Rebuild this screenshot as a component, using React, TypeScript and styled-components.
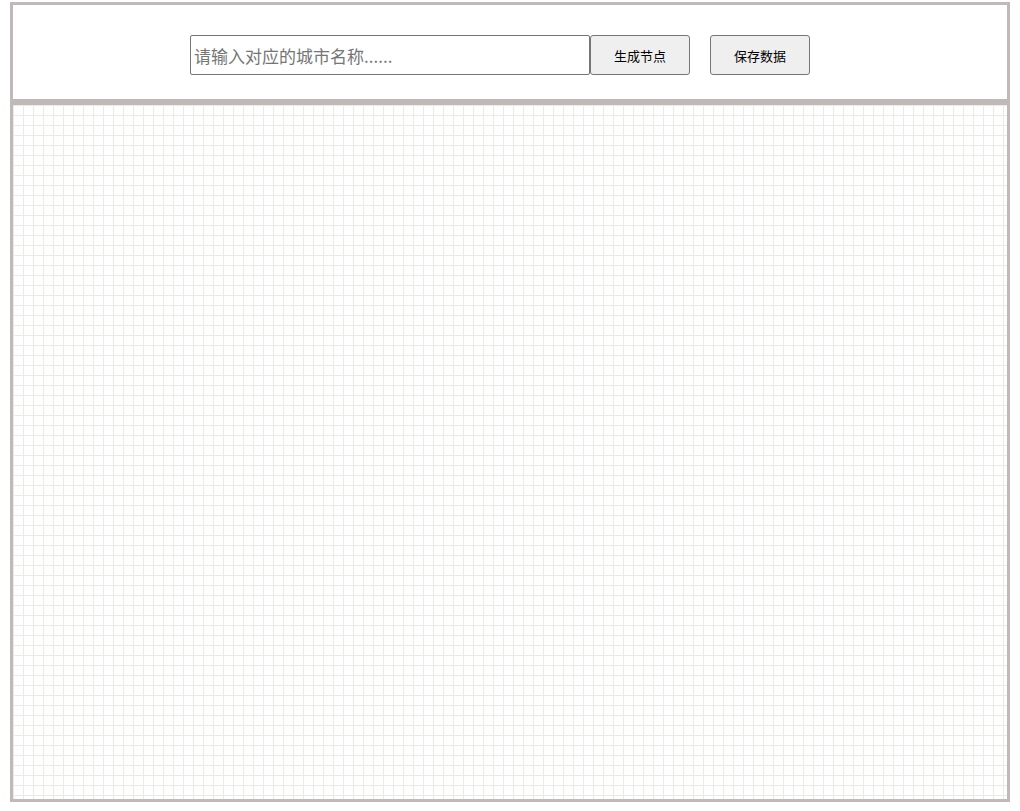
import React from 'react';
import styled, { createGlobalStyle } from 'styled-components';

const GlobalStyle = createGlobalStyle`
  html, body {
    margin: 0;
    padding: 0;
    background: #fff;
    font-family: "Noto Sans CJK SC", "Noto Sans", sans-serif;
  }
`;

const Page = styled.div`
  width: 1000px;
  padding: 2px 10px 0 10px;
`;

const Toolbar = styled.div`
  height: 100px;
  box-sizing: border-box;
  border: 3px solid #c1b9b9;
  display: flex;
  align-items: flex-start;
  justify-content: center;
  padding-top: 30px;
  padding-right: 20px;
`;

const CityInput = styled.input`
  width: 400px;
  height: 40px;
  box-sizing: border-box;
  border: 1px solid #767676;
  border-radius: 2px;
  padding: 0 3px;
  font-size: 17px;
  font-family: "Noto Sans CJK SC", sans-serif;
  outline: none;

  &::placeholder {
    color: #757575;
  }
`;

const ActionButton = styled.button<{ $gap?: number }>`
  width: 100px;
  height: 40px;
  margin-left: ${(p) => p.$gap ?? 0}px;
  box-sizing: border-box;
  background: #efefef;
  border: 1px solid #767676;
  border-radius: 3px;
  font-size: 13px;
  font-family: "Noto Sans CJK SC", sans-serif;
  color: #000;
  padding: 0;
  cursor: pointer;
`;

const Canvas = styled.div`
  height: 700px;
  box-sizing: border-box;
  border: 3px solid #c1b9b9;
  background-color: #fff;
  background-image:
    linear-gradient(to right, #e9ece4 1px, transparent 1px),
    linear-gradient(to bottom, #e9ece4 1px, transparent 1px);
  background-size: 10px 10px;
`;

export default function App() {
  return (
    <>
      <GlobalStyle />
      <Page>
        <Toolbar>
          <CityInput placeholder="请输入对应的城市名称......" />
          <ActionButton>生成节点</ActionButton>
          <ActionButton $gap={20}>保存数据</ActionButton>
        </Toolbar>
        <Canvas />
      </Page>
    </>
  );
}
